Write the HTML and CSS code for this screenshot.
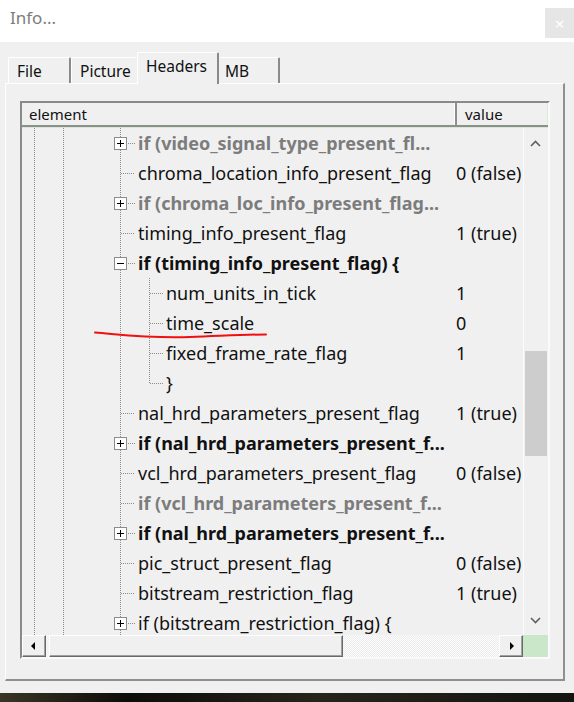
FILE: index.html
```html
<!DOCTYPE html>
<html>
<head>
<meta charset="utf-8">
<link rel="stylesheet" href="styles.css">
</head>
<body>
<div class="titlebar">
  <span class="title">Info...</span>
  <span class="close">×</span>
</div>
<div class="client">
  <div class="tabs">
    <div class="tab t-file">File</div>
    <div class="tab t-pic">Picture</div>
    <div class="tab sel t-hdr">Headers</div>
    <div class="tab t-mb">MB</div>
  </div>
  <div class="panel">
    <div class="tree">
      <div class="header">
        <div class="hcell hc-el">element</div>
        <div class="hcell hc-val">value</div>
      </div>
      <div class="tbody">
        <div class="rows">
          <div class="row"><div class="el"><span class="node nb"><i class="box plus"></i><i class="conn cs"></i></span><span class="name b grey">if (video_signal_type_present_fl...</span></div><span class="val"></span></div>
          <div class="row"><div class="el"><span class="node"><i class="conn"></i></span><span class="name">chroma_location_info_present_flag</span></div><span class="val">0 (false)</span></div>
          <div class="row"><div class="el"><span class="node nb"><i class="box plus"></i><i class="conn cs"></i></span><span class="name b grey">if (chroma_loc_info_present_flag...</span></div><span class="val"></span></div>
          <div class="row"><div class="el"><span class="node"><i class="conn"></i></span><span class="name">timing_info_present_flag</span></div><span class="val">1 (true)</span></div>
          <div class="row"><div class="el"><span class="node nb"><i class="box minus"></i><i class="conn cs"></i></span><span class="name b">if (timing_info_present_flag) {</span></div><span class="val"></span></div>
          <div class="row"><div class="el"><span class="node n4"><i class="vl"></i><i class="conn"></i></span><span class="name">num_units_in_tick</span></div><span class="val">1</span></div>
          <div class="row"><div class="el"><span class="node n4"><i class="vl"></i><i class="conn"></i></span><span class="name">time_scale</span></div><span class="val">0</span></div>
          <div class="row"><div class="el"><span class="node n4"><i class="vl"></i><i class="conn"></i></span><span class="name">fixed_frame_rate_flag</span></div><span class="val">1</span></div>
          <div class="row"><div class="el"><span class="node n4"><i class="vl half"></i><i class="conn"></i></span><span class="name">}</span></div><span class="val"></span></div>
          <div class="row"><div class="el"><span class="node"><i class="conn"></i></span><span class="name">nal_hrd_parameters_present_flag</span></div><span class="val">1 (true)</span></div>
          <div class="row"><div class="el"><span class="node nb"><i class="box plus"></i><i class="conn cs"></i></span><span class="name b">if (nal_hrd_parameters_present_f...</span></div><span class="val"></span></div>
          <div class="row"><div class="el"><span class="node"><i class="conn"></i></span><span class="name">vcl_hrd_parameters_present_flag</span></div><span class="val">0 (false)</span></div>
          <div class="row"><div class="el"><span class="node"><i class="conn"></i></span><span class="name b grey">if (vcl_hrd_parameters_present_f...</span></div><span class="val"></span></div>
          <div class="row"><div class="el"><span class="node nb"><i class="box plus"></i><i class="conn cs"></i></span><span class="name b">if (nal_hrd_parameters_present_f...</span></div><span class="val"></span></div>
          <div class="row"><div class="el"><span class="node"><i class="conn"></i></span><span class="name">pic_struct_present_flag</span></div><span class="val">0 (false)</span></div>
          <div class="row"><div class="el"><span class="node"><i class="conn"></i></span><span class="name">bitstream_restriction_flag</span></div><span class="val">1 (true)</span></div>
          <div class="row"><div class="el"><span class="node nb"><i class="box plus"></i><i class="conn cs"></i></span><span class="name">if (bitstream_restriction_flag) {</span></div><span class="val"></span></div>
        </div>
        <div class="vscroll">
          <svg class="varrow up" width="11" height="7" viewBox="0 0 11 7"><polyline points="1,6 5.5,1.5 10,6" fill="none" stroke="#606060" stroke-width="1.6"/></svg>
          <div class="vthumb"></div>
          <svg class="varrow down" width="11" height="7" viewBox="0 0 11 7"><polyline points="1,1 5.5,5.5 10,1" fill="none" stroke="#606060" stroke-width="1.6"/></svg>
        </div>
      </div>
      <div class="hscroll">
        <div class="sbtn"><i class="tri left"></i></div>
        <div class="htrack"><div class="hthumb"></div></div>
        <div class="sbtn"><i class="tri right"></i></div>
        <div class="corner"></div>
      </div>
    </div>
  </div>
</div>
<div class="desktop"></div>
<svg class="annot" width="574" height="702" viewBox="0 0 574 702"><path d="M95 332.5 C 125 335, 150 338.5, 190 337 S 245 334.5, 266 334.5" fill="none" stroke="#f01010" stroke-width="2" stroke-linecap="round"/></svg>
</body>
</html>
```

FILE: styles.css
```css
* { box-sizing: border-box; }
html, body { margin: 0; padding: 0; }
body {
  width: 574px;
  height: 702px;
  overflow: hidden;
  position: relative;
  background: #f0f0f0;
  font-family: "Noto Sans", "Open Sans", sans-serif;
  color: #111;
}
.titlebar {
  height: 42px;
  background: #fff;
  display: flex;
  justify-content: space-between;
  align-items: flex-start;
}
.title {
  margin: 6px 0 0 10px;
  font-size: 17px;
  color: #7d7d7d;
}
.close {
  margin-top: 8px;
  width: 29px;
  height: 30px;
  background: #e6e6e6;
  color: #fff;
  font-size: 17px;
  display: flex;
  align-items: center;
  justify-content: center;
}
.client {
  height: 651px;
  padding: 10px 9px 12px 5px;
  display: flex;
  flex-direction: column;
}
.tabs {
  height: 31px;
  display: flex;
  align-items: flex-end;
  padding-left: 3px;
  position: relative;
  z-index: 1;
}
.tab {
  height: 26px;
  font-size: 15.5px;
  padding: 2px 0 0 8px;
  background: #f0f0f0;
  border-top: 1px solid #fff;
  border-left: 1px solid #fff;
  border-right: 2px solid #8a8a8a;
  border-radius: 2px 2px 0 0;
  line-height: 22px;
}
.t-file { width: 63px; }
.t-pic { width: 66px; border-right-color: #f0f0f0; }
.t-hdr {
  width: 82px;
  height: 32px;
  margin-bottom: -1px;
  padding-top: 0;
  border-right: 2px solid #8a8a8a;
  line-height: 26px;
}
.t-mb { width: 61px; padding-left: 6px; border-left: none; }
.panel {
  flex: 1;
  border-top: 1px solid #fff;
  border-left: 1px solid #fff;
  border-right: 2px solid #8f8f8f;
  border-bottom: 2px solid #8f8f8f;
  padding: 17px 0 0 14px;
}
.tree {
  width: 530px;
  height: 558px;
  border: 2px solid;
  border-color: #8a8a8a #fafafa #fafafa #8a8a8a;
  display: flex;
  flex-direction: column;
  background: #f0f0f0;
}
.header {
  height: 24px;
  display: flex;
  border-bottom: 2px solid #8e8e8e;
  font-size: 15px;
  line-height: 22px;
}
.hcell { padding-left: 7px; white-space: nowrap; }
.hc-el {
  width: 435px;
  border-right: 2px solid #8e8e8e;
  box-shadow: inset -1px 0 0 #fff;
}
.hc-val {
  flex: 1;
  padding-left: 8px;
  border-right: 1px solid #d6ecd6;
}
.tbody {
  height: 508px;
  display: flex;
  border-top: 1px solid #d3ead3;
}
.rows {
  width: 501px;
  overflow: hidden;
  background-image:
    linear-gradient(to bottom, #8c8c8c 1px, transparent 1px),
    linear-gradient(to bottom, #8c8c8c 1px, transparent 1px),
    linear-gradient(to bottom, #8c8c8c 1px, transparent 1px);
  background-size: 1px 2px;
  background-repeat: repeat-y;
  background-position: 12px 0, 41px 0, 98px 0;
}
.row {
  height: 30px;
  display: flex;
  align-items: center;
  font-size: 18px;
  white-space: nowrap;
}
.el {
  width: 434px;
  flex: none;
  display: flex;
  align-items: center;
  height: 30px;
  overflow: hidden;
}
.node {
  width: 116px;
  height: 30px;
  flex: none;
  display: flex;
  align-items: center;
  padding-left: 99px;
}
.node.nb { padding-left: 92px; }
.node.n4 { width: 144px; padding-left: 127px; }
.conn {
  display: block;
  width: 13px;
  height: 1px;
  background-image: linear-gradient(to right, #8c8c8c 1px, transparent 1px);
  background-size: 2px 1px;
}
.conn.cs { width: 7px; margin-left: 1px; }
.vl {
  display: block;
  width: 1px;
  height: 30px;
  align-self: flex-start;
  background-image: linear-gradient(to bottom, #8c8c8c 1px, transparent 1px);
  background-size: 1px 2px;
}
.vl.half { height: 16px; }
.box {
  display: block;
  width: 13px;
  height: 13px;
  border: 1px solid #8c8c8c;
  background: #fff;
  position: relative;
  flex: none;
}
.box::before {
  content: "";
  position: absolute;
  left: 2px;
  top: 5px;
  width: 7px;
  height: 1px;
  background: #000;
}
.box.plus::after {
  content: "";
  position: absolute;
  left: 5px;
  top: 2px;
  width: 1px;
  height: 7px;
  background: #000;
}
.name { padding-left: 0; }
.b { font-weight: 700; }
.grey { color: #7c7c7c; }
.val { padding-left: 0; }
.vscroll {
  width: 25px;
  position: relative;
  background: #f0f0f0;
  border-left: 1px solid #fbfbfb;
}
.varrow { position: absolute; left: 6px; }
.varrow.up { top: 12px; }
.varrow.down { top: 489px; }
.vthumb {
  position: absolute;
  left: 1px;
  top: 223px;
  width: 22px;
  height: 105px;
  background: #cdcdcd;
}
.hscroll {
  height: 22px;
  display: flex;
}
.sbtn {
  width: 24px;
  height: 22px;
  flex: none;
  background: #f0f0f0;
  border: 1px solid;
  border-color: #fff #6a6a6a #6a6a6a #fff;
  box-shadow: inset -1px -1px 0 #a0a0a0;
  display: flex;
  align-items: center;
  justify-content: center;
}
.tri { display: block; width: 0; height: 0; border-top: 4px solid transparent; border-bottom: 4px solid transparent; }
.tri.left { border-right: 4px solid #000; margin-right: 2px; }
.tri.right { border-left: 4px solid #000; margin-left: 1px; }
.htrack {
  flex: 1;
  background: repeating-conic-gradient(#fdfdfd 0 25%, #ececec 0 50%) 0 0 / 2px 2px;
  padding-left: 3px;
}
.hthumb {
  width: 294px;
  height: 22px;
  background: #f0f0f0;
  border: 1px solid;
  border-color: #fff #6a6a6a #6a6a6a #fff;
  box-shadow: inset -1px -1px 0 #a0a0a0;
}
.corner {
  width: 25px;
  flex: none;
  background: #cae7ca;
}
.desktop {
  height: 9px;
  background: linear-gradient(90deg, #3a3524 0, #0c0c09 22%, #26251c 55%, #141410 100%);
}
.annot {
  position: absolute;
  left: 0;
  top: 0;
  pointer-events: none;
}
```
